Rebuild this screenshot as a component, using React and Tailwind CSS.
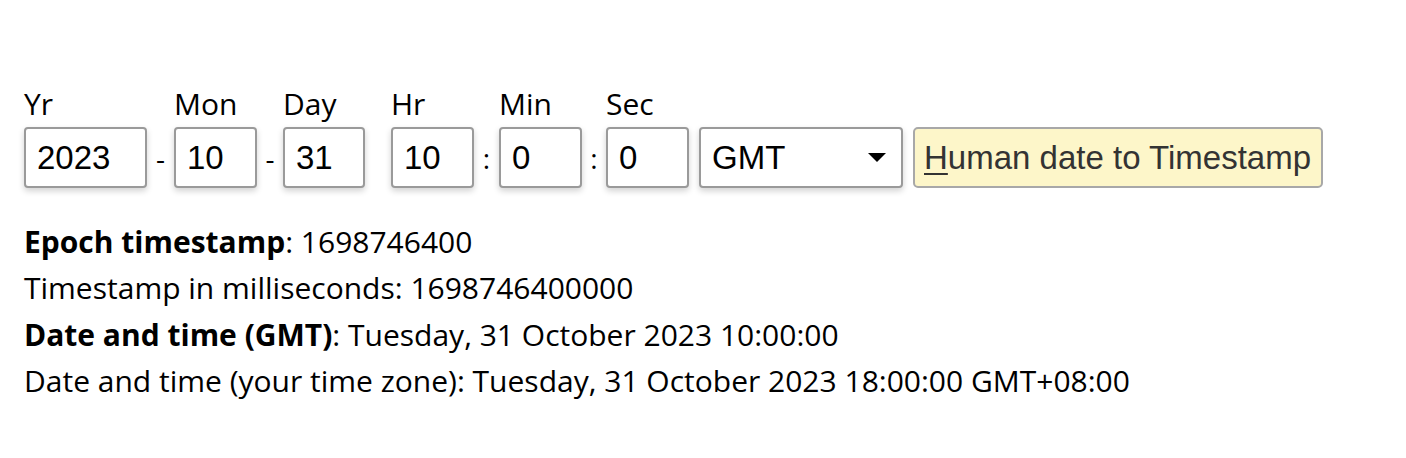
import React from "react";

const inputCls =
  "h-[61px] border-2 border-[#9a9a9a] rounded-[4px] bg-white shadow-[0_3px_6px_rgba(0,0,0,0.18)] pl-[11px] flex items-center text-[33px] text-black font-['Liberation_Sans',Arial,sans-serif]";

function Field({ label, value, w }) {
  return (
    <div className="flex flex-col">
      <div className="h-[46px] text-[30px] leading-[46px] text-black">{label}</div>
      <div className={inputCls} style={{ width: w }}>
        {value}
      </div>
    </div>
  );
}

function Sep({ ch, w }) {
  return (
    <div className="flex flex-col" style={{ width: w }}>
      <div className="h-[46px]" />
      <div className="h-[61px] flex items-center justify-center text-[28px] text-black">{ch}</div>
    </div>
  );
}

export default function App() {
  return (
    <div className="w-[1406px] h-[458px] bg-white font-['Open_Sans',sans-serif] text-black pl-[24px] pt-[81px]">
      <div className="flex">
        <Field label="Yr" value="2023" w={123} />
        <Sep ch="-" w={27} />
        <Field label="Mon" value="10" w={83} />
        <Sep ch="-" w={26} />
        <Field label="Day" value="31" w={82} />
        <Sep ch="" w={26} />
        <Field label="Hr" value="10" w={83} />
        <Sep ch=":" w={25} />
        <Field label="Min" value="0" w={83} />
        <Sep ch=":" w={24} />
        <Field label="Sec" value="0" w={83} />
        <div className="flex flex-col ml-[10px]">
          <div className="h-[46px]" />
          <div className={inputCls + " w-[204px] justify-between pr-[15px]"}>
            <span>GMT</span>
            <svg width="18" height="9" viewBox="0 0 18 9">
              <polygon points="0,0 18,0 9,9" fill="#000" />
            </svg>
          </div>
        </div>
        <div className="flex flex-col ml-[10px]">
          <div className="h-[46px]" />
          <div className="h-[61px] w-[410px] border-2 border-[#a8a8a8] rounded-[5px] bg-[#fdf6c9] flex items-center pl-[9px] text-[33px] text-[#333] font-['Liberation_Sans',Arial,sans-serif]">
            <span className="underline decoration-[2px] underline-offset-[4px]">H</span>
            <span>uman date to Timestamp</span>
          </div>
        </div>
      </div>
      <div className="mt-[31px] text-[30px] leading-[46.3px]">
        <div>
          <b>Epoch timestamp</b>: 1698746400
        </div>
        <div>Timestamp in milliseconds: 1698746400000</div>
        <div>
          <b>Date and time (GMT)</b>: Tuesday, 31 October 2023 10:00:00
        </div>
        <div>Date and time (your time zone): Tuesday, 31 October 2023 18:00:00 GMT+08:00</div>
      </div>
    </div>
  );
}
